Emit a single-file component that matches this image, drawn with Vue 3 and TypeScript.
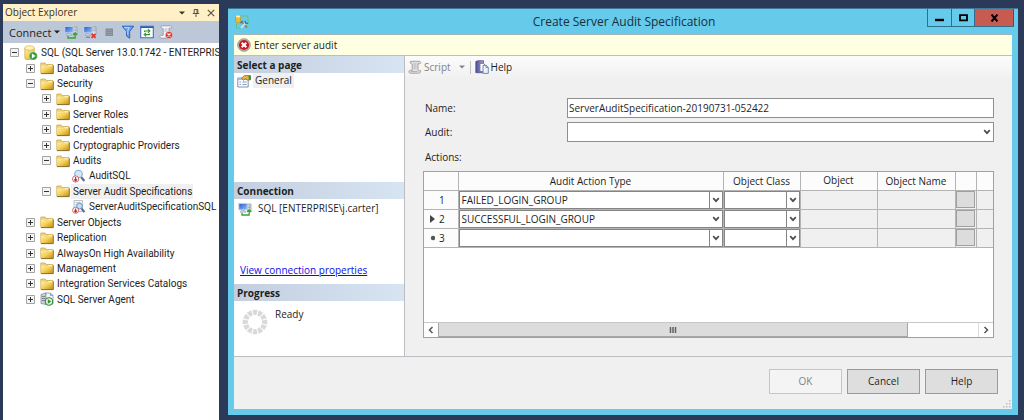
<script setup lang="ts">
import { ref } from 'vue'

interface TreeNode {
  label: string
  level: number
  icon: string
  state: 'open' | 'closed' | 'leaf'
  selected?: boolean
}

interface ActionRow {
  marker: '' | 'current' | 'new'
  action: string
}

const nodes: TreeNode[] = [
  { label: 'SQL (SQL Server 13.0.1742 - ENTERPRISE', level: 0, icon: 'server', state: 'open' },
  { label: 'Databases', level: 1, icon: 'folder', state: 'closed' },
  { label: 'Security', level: 1, icon: 'folder', state: 'open' },
  { label: 'Logins', level: 2, icon: 'folder', state: 'closed' },
  { label: 'Server Roles', level: 2, icon: 'folder', state: 'closed' },
  { label: 'Credentials', level: 2, icon: 'folder', state: 'closed' },
  { label: 'Cryptographic Providers', level: 2, icon: 'folder', state: 'closed' },
  { label: 'Audits', level: 2, icon: 'folder', state: 'open' },
  { label: 'AuditSQL', level: 3, icon: 'audit', state: 'leaf' },
  { label: 'Server Audit Specifications', level: 2, icon: 'folder', state: 'open', selected: true },
  { label: 'ServerAuditSpecificationSQL', level: 3, icon: 'spec', state: 'leaf' },
  { label: 'Server Objects', level: 1, icon: 'folder', state: 'closed' },
  { label: 'Replication', level: 1, icon: 'folder', state: 'closed' },
  { label: 'AlwaysOn High Availability', level: 1, icon: 'folder', state: 'closed' },
  { label: 'Management', level: 1, icon: 'folder', state: 'closed' },
  { label: 'Integration Services Catalogs', level: 1, icon: 'folder', state: 'closed' },
  { label: 'SQL Server Agent', level: 1, icon: 'agent', state: 'closed' },
]

const tools = [
  { icon: 'connect', label: 'Connect Object Explorer' },
  { icon: 'disconnect', label: 'Disconnect' },
  { icon: 'stop', label: 'Stop' },
  { icon: 'filter', label: 'Filter' },
  { icon: 'refresh', label: 'Refresh' },
  { icon: 'scripterror', label: 'Script error' },
]

const name = ref('ServerAuditSpecification-20190731-052422')
const audit = ref('')
const rows = ref<ActionRow[]>([
  { marker: '', action: 'FAILED_LOGIN_GROUP' },
  { marker: 'current', action: 'SUCCESSFUL_LOGIN_GROUP' },
  { marker: 'new', action: '' },
])
const actionTypes = ['', 'FAILED_LOGIN_GROUP', 'SUCCESSFUL_LOGIN_GROUP']
const ticks = Array.from({ length: 12 }, (_, i) => i * 30)
</script>

<template>
  <svg class="defs" aria-hidden="true">
    <defs>
      <linearGradient id="gold" x1="0" y1="0" x2="1" y2="1">
        <stop offset="0" stop-color="#fff0a8" />
        <stop offset="0.5" stop-color="#f3cf57" />
        <stop offset="1" stop-color="#c98f10" />
      </linearGradient>
      <linearGradient id="blue" x1="0" y1="0" x2="1" y2="1">
        <stop offset="0" stop-color="#2b55c8" />
        <stop offset="1" stop-color="#8fc4ff" />
      </linearGradient>
      <linearGradient id="indigo" x1="0" y1="0" x2="1" y2="0">
        <stop offset="0" stop-color="#4a4a94" />
        <stop offset="1" stop-color="#a9a9dd" />
      </linearGradient>
    </defs>
    <symbol id="folder" viewBox="0 0 14 14">
      <path d="M.8 2h4.4l1 1.5h6.6v8.7H.8z" fill="#ecd27c" stroke="#c8a548" stroke-width=".7" />
      <path d="M1.2 4.6h11.6v7.6H1.2z" fill="url(#gold)" />
      <path d="M1 12.6h12.3V4.3" fill="none" stroke="#7a6322" stroke-width=".9" />
      <path d="M8.5 4.8h3.8" stroke="#fff8d8" />
    </symbol>
    <symbol id="server" viewBox="0 0 14 16">
      <path d="M.8 3v10c0 3 9.4 3 9.4 0V3z" fill="url(#gold)" stroke="#c49a2c" stroke-width=".6" />
      <ellipse cx="5.5" cy="3" rx="4.7" ry="2.2" fill="#fff3bd" stroke="#c9a94a" stroke-width=".6" />
      <circle cx="9.2" cy="11" r="4.3" fill="#3c9b3a" stroke="#e6f3df" stroke-width=".7" />
      <path d="M7.9 8.6v4.8l3.6-2.4z" fill="#fff" />
    </symbol>
    <symbol id="audit" viewBox="0 0 14 14">
      <circle cx="6.5" cy="5" r="3.8" fill="#cfe8fa" stroke="#8fa9c4" stroke-width="1.1" />
      <path d="M9.2 8.2l3.2 3.8" stroke="#5a6f96" stroke-width="2.2" />
      <circle cx="3.6" cy="10" r="3.1" fill="#fff" stroke="#c4474d" stroke-width=".8" />
      <path d="M3.6 8v4M2.2 10.4l1.4 1.6L5 10.4" fill="none" stroke="#c0262d" stroke-width="1.1" />
    </symbol>
    <symbol id="spec" viewBox="0 0 14 14">
      <path d="M2 .5h8.5v11H2z" fill="#eef3fa" stroke="#a9b4c2" stroke-width=".8" />
      <path d="M3.5 2.5h5M3.5 4.5h3" stroke="#b5bfcc" stroke-width=".8" />
      <circle cx="7.5" cy="6" r="2.8" fill="#bfe0fa" stroke="#7894b4" />
      <path d="M9.5 8.5l3 3.7" stroke="#5a6f96" stroke-width="2" />
      <circle cx="3.6" cy="10.3" r="3" fill="#fff" stroke="#c4474d" stroke-width=".8" />
      <path d="M3.6 8.4v4M2.2 10.6l1.4 1.6L5 10.6" fill="none" stroke="#c0262d" stroke-width="1.1" />
    </symbol>
    <symbol id="agent" viewBox="0 0 14 14">
      <path d="M1 2.5L6 .8v11.7l-5-1z" fill="#c9ced6" stroke="#7b838f" stroke-width=".7" />
      <path d="M2 4.5h3M2 6.5h3M2 8.5h3" stroke="#6c7480" stroke-width=".8" />
      <path d="M6 1h4.5L13 3.5V12H6z" fill="#f2f6fb" stroke="#8995a6" stroke-width=".8" />
      <path d="M10.5 1v2.5H13" fill="#9cc0e6" stroke="#6c8fb8" stroke-width=".7" />
      <circle cx="9" cy="9.5" r="3.7" fill="#dff2dc" stroke="#2f8f31" stroke-width="1.1" />
      <path d="M7.8 7.3v4.4l3.4-2.2z" fill="#2f8f31" />
    </symbol>
    <symbol id="pc" viewBox="0 0 14 14">
      <path d="M9.5 2h3.5v7.5H9.5z" fill="#dde2e8" stroke="#87909c" stroke-width=".7" />
      <path d="M10.3 4h2M10.3 5.7h2" stroke="#78828e" stroke-width=".7" />
      <path d="M.8 1.4h8.4v6.5H.8z" fill="url(#blue)" stroke="#c9d6ea" stroke-width=".9" />
      <path d="M3 8.6h4l1 1.6H2z" fill="#d8dde4" stroke="#8791a0" stroke-width=".5" />
    </symbol>
    <symbol id="connect" viewBox="0 0 14 14">
      <use href="#pc" />
      <path d="M4 10.8v2.2h7.2V8.5M9.2 10l2-2.2 2 2.2" fill="none" stroke="#35a335" stroke-width="1.3" />
    </symbol>
    <symbol id="disconnect" viewBox="0 0 14 14">
      <use href="#pc" />
      <path d="M3 12.2h4" stroke="#6c7480" />
      <path d="M8.6 8.8l4 4M12.6 8.8l-4 4" stroke="#e0372d" stroke-width="1.8" />
    </symbol>
    <symbol id="stop" viewBox="0 0 14 14"><path d="M3.5 3.5h7.5V11H3.5z" fill="#868c94" /><path d="M4.5 5.5h5.5M4.5 7.5h5.5M4.5 9.5h5.5" stroke="#979da5" /></symbol>
    <symbol id="filter" viewBox="0 0 14 14">
      <path d="M1.2 1.2h11.6L8.7 6.4v6.8L5.6 11V6.4z" fill="#6fa3ea" stroke="#2f62bb" />
      <path d="M3.2 2.5h5L6.8 5.5v4.2" fill="none" stroke="#b9d7fb" />
    </symbol>
    <symbol id="refresh" viewBox="0 0 14 14">
      <path d="M.7 1.3h12.6v11.4H.7z" fill="#fff" stroke="#3c6fc0" stroke-width="1.1" />
      <path d="M.7 2.2h12.6" stroke="#2b5cb4" stroke-width="1.6" />
      <path d="M4.6 7V6h4.2M8 4.2L9.8 6 8 7.8M9.4 8.6v1H5.2M6 7.8L4.2 9.6 6 11.4" fill="none" stroke="#2f9a2e" stroke-width="1.2" />
    </symbol>
    <symbol id="script" viewBox="0 0 14 14">
      <path d="M3 1.3h8.4c1.6 0 1.9 2.4.2 2.4H10v5.8c.3 1.6 1.2 1.6 2.6 1v1.2c0 .9-1 1.5-2 1.5H2.4c-2 0-2-2.9 0-2.9h1.8V4.2C2 4 1.4 1.3 3 1.3z" fill="#dfdfdf" stroke="#9c9c9c" stroke-width=".9" />
      <path d="M5.5 4h3M5.5 6h3M5.5 8h3M2.6 11.5h7" stroke="#aaa" stroke-width=".8" />
    </symbol>
    <symbol id="scripterror" viewBox="0 0 14 14">
      <path d="M3 .8h8.4c1.6 0 1.9 2.4.2 2.4H10v7H12v1.5c0 .9-1 1.5-2 1.5H2.4c-2 0-2-2.9 0-2.9h1.8V3.7C2 3.5 1.4.8 3 .8z" fill="#f3f5f8" stroke="#8b93a0" stroke-width=".8" />
      <path d="M5.5 4h3M5.5 6h3" stroke="#9aa3b0" stroke-width=".8" />
      <circle cx="10" cy="10" r="3.6" fill="#d5322c" stroke="#f5d9d6" stroke-width=".6" />
      <path d="M8.5 8.5l3 3M11.5 8.5l-3 3" stroke="#fff" stroke-width="1.2" />
    </symbol>
    <symbol id="dialog" viewBox="0 0 14 14">
      <path d="M6 1h7v7M1.5 9v4H6" fill="none" stroke="#69bb52" stroke-dasharray="1.6 1" />
      <path d="M.8 1.5v5.3c0 1.4 4.6 1.4 4.6 0V1.5z" fill="#eebe35" stroke="#b98b1a" stroke-width=".6" />
      <ellipse cx="3.1" cy="1.6" rx="2.3" ry="1" fill="#fff1ae" />
      <path d="M7.2 7.6l5 5" stroke="#a9803c" stroke-width="1.8" />
      <path d="M6 13l5-5.3" stroke="#dbe2ea" stroke-width="1.8" />
      <path d="M10.2 5.8l.4 2.3 2.6.3M5.4 8.2l2.4-2.4" fill="none" stroke="#5a6470" stroke-width="1.2" />
    </symbol>
    <symbol id="error" viewBox="0 0 14 14">
      <circle cx="7" cy="7" r="6.3" fill="#bdbdbd" stroke="#858585" stroke-width=".8" />
      <circle cx="7" cy="7" r="5.1" fill="#c91a20" />
      <path d="M4.7 4.7l4.6 4.6M9.3 4.7L4.7 9.3" stroke="#fff" stroke-width="2" />
    </symbol>
    <symbol id="page" viewBox="0 0 14 14">
      <path d="M.8 4h10.4v9H.8z" fill="#f7faff" stroke="#6f88ac" stroke-width=".9" />
      <path d="M1 5.2h10" stroke="#9fb8da" stroke-width="1.5" />
      <path d="M2.5 8h1.5M2.5 10.5h1.5M5.5 8h4M5.5 10.5h4" stroke="#7d95b8" stroke-width=".9" />
      <path d="M4.5 4.2L7.6 1.4l4.2.2 1.8 1.2v3L10.5 6 8.6 4.7 6.6 6.2z" fill="#e3b54a" stroke="#84601a" stroke-width=".7" />
      <path d="M11.5 1.2h2.3v4.5h-2z" fill="#3d8a43" />
    </symbol>
    <symbol id="help" viewBox="0 0 14 14">
      <path d="M.8 1.5L3 .7h5.5v12H.8z" fill="url(#indigo)" stroke="#454585" stroke-width=".7" />
      <path d="M5 3.4h3.5l1.7 1.7v6.4H5z" fill="#fff" stroke="#5d6f9e" stroke-width=".8" />
      <path d="M8 5.3h3.2L13.3 7.4v6H8z" fill="#eaf1fb" stroke="#5d6f9e" stroke-width=".8" />
      <path d="M11 5.3v2.2h2.3" fill="none" stroke="#5d6f9e" stroke-width=".7" />
    </symbol>
    <symbol id="chevron" viewBox="0 0 8 8"><path d="M1.2 2.2L4 5.2l2.8-3" fill="none" stroke="#4c4c4c" stroke-width="1.7" /></symbol>
    <symbol id="caret" viewBox="0 0 6 4"><path d="M0 .5h6L3 3.5z" fill="currentColor" /></symbol>
  </svg>

  <div class="desktop">
    <aside class="explorer">
      <header class="explorer-title">
        <h2>Object Explorer</h2>
        <button aria-label="Window position"><svg class="caret"><use href="#caret" /></svg></button>
        <button aria-label="Auto hide"><svg class="mini" viewBox="0 0 8 8"><path d="M2.2 .5h3.6v4H2.2zM5 .5v4M.8 4.5h6.4M4 4.5V8" fill="none" stroke="#5c5544" /></svg></button>
        <button aria-label="Close"><svg class="mini" viewBox="0 0 8 8"><path d="M.8 .8l6.4 6.4M7.2 .8L.8 7.2" stroke="#5c5544" stroke-width="1.2" /></svg></button>
      </header>
      <div class="explorer-tools">
        <button class="connect">Connect <svg class="caret"><use href="#caret" /></svg></button>
        <button v-for="tool in tools" :key="tool.icon" :aria-label="tool.label"><svg class="icon"><use :href="'#' + tool.icon" /></svg></button>
      </div>
      <ul class="tree">
        <li v-for="node in nodes" :key="node.label" :class="'level-' + node.level">
          <button v-if="node.state !== 'leaf'" class="expander" :aria-label="'Toggle ' + node.label">
            <svg viewBox="0 0 9 9"><path d="M.5 .5h8v8h-8z" fill="#f4f4f4" stroke="#a3a3a3" /><path d="M2 4.5h5" stroke="#333" /><path v-if="node.state === 'closed'" d="M4.5 2v5" stroke="#333" /></svg>
          </button>
          <span v-else class="expander"></span>
          <svg class="icon" :class="{ tall: node.icon === 'server' }"><use :href="'#' + node.icon" /></svg>
          <span class="node-label" :class="{ selected: node.selected }">{{ node.label }}</span>
        </li>
      </ul>
    </aside>

    <main class="dialog">
      <header class="titlebar">
        <svg class="icon"><use href="#dialog" /></svg>
        <h1>Create Server Audit Specification</h1>
        <div class="window-buttons">
          <button class="minimize" aria-label="Minimize"><svg viewBox="0 0 9 8"><path d="M0 6h9" stroke="#000" stroke-width="2.4" /></svg></button>
          <button class="maximize" aria-label="Maximize"><svg viewBox="0 0 9 8"><path d="M1 1.2h7v5.2H1z" fill="none" stroke="#000" stroke-width="1.8" /></svg></button>
          <button class="close" aria-label="Close dialog"><svg viewBox="0 0 9 8"><path d="M1.5 .5l6 7M7.5 .5l-6 7" stroke="#000" stroke-width="2" /></svg></button>
        </div>
      </header>

      <div class="content">
        <div class="message"><svg class="icon"><use href="#error" /></svg>Enter server audit</div>
        <div class="body">
          <nav class="side">
            <section class="pages">
              <h3>Select a page</h3>
              <div class="page-item"><svg class="icon"><use href="#page" /></svg><button>General</button></div>
            </section>
            <section class="connection">
              <h3>Connection</h3>
              <p><svg class="icon"><use href="#connect" /></svg>SQL [ENTERPRISE\j.carter]</p>
              <a href="#">View connection properties</a>
            </section>
            <section class="progress">
              <h3>Progress</h3>
              <p>
                <svg class="spinner" viewBox="0 0 26 26"><path v-for="angle in ticks" :key="angle" d="M10.4 .8h5.2l-1.2 5.2h-2.8z" fill="#d9d9d9" :transform="`rotate(${angle} 13 13)`" /></svg>
                Ready
              </p>
            </section>
          </nav>

          <div class="page">
            <div class="page-tools">
              <button class="script" disabled><svg class="icon"><use href="#script" /></svg>Script<svg class="caret"><use href="#caret" /></svg></button>
              <span class="divider"></span>
              <button><svg class="icon"><use href="#help" /></svg>Help</button>
            </div>
            <form class="form" @submit.prevent>
              <div class="field">
                <label for="spec-name">Name:</label>
                <input id="spec-name" v-model="name" type="text" />
              </div>
              <div class="field">
                <label for="spec-audit">Audit:</label>
                <span class="combo"><select id="spec-audit" v-model="audit"><option value=""></option></select><svg><use href="#chevron" /></svg></span>
              </div>
              <p id="actions-label" class="actions-label">Actions:</p>
              <div class="grid">
                <table aria-labelledby="actions-label">
                  <colgroup><col class="c-head" /><col /><col class="c-mid" /><col class="c-mid" /><col class="c-name" /><col class="c-button" /><col class="c-rest" /></colgroup>
                  <thead>
                    <tr><th></th><th>Audit Action Type</th><th>Object Class</th><th class="raised">Object</th><th>Object Name</th><th></th><th></th></tr>
                  </thead>
                  <tbody>
                    <tr v-for="(row, index) in rows" :key="index">
                      <th scope="row">
                        <span class="row-head">
                          <svg viewBox="0 0 6 8"><path v-if="row.marker === 'current'" d="M1 0v8l5-4z" fill="#444" /><circle v-if="row.marker === 'new'" cx="4" cy="4" r="2.2" fill="#555" /></svg>
                          {{ index + 1 }}
                        </span>
                      </th>
                      <td>
                        <span class="combo cell" :class="{ active: row.marker === 'current' }"><select v-model="row.action" :aria-label="'Audit action type ' + (index + 1)"><option v-for="type in actionTypes" :key="type" :value="type">{{ type }}</option></select><svg><use href="#chevron" /></svg></span>
                      </td>
                      <td><span class="combo cell"><select :aria-label="'Object class ' + (index + 1)"><option></option></select><svg><use href="#chevron" /></svg></span></td>
                      <td></td>
                      <td></td>
                      <td><button class="browse" :aria-label="'Browse object ' + (index + 1)"></button></td>
                      <td></td>
                    </tr>
                  </tbody>
                </table>
                <div class="scrollbar">
                  <button type="button" aria-label="Scroll left"><svg viewBox="0 0 8 8"><path d="M5.5 1L2.5 4l3 3" fill="none" stroke="#555" stroke-width="1.5" /></svg></button>
                  <div class="track"><div class="thumb"><svg viewBox="0 0 8 6"><path d="M1.5 0v6M4 0v6M6.5 0v6" stroke="#606060" stroke-width="1.5" /></svg></div></div>
                  <button type="button" aria-label="Scroll right"><svg viewBox="0 0 8 8"><path d="M2.5 1l3 3-3 3" fill="none" stroke="#555" stroke-width="1.5" /></svg></button>
                </div>
              </div>
            </form>
          </div>
        </div>
        <footer class="buttons">
          <button disabled>OK</button>
          <button>Cancel</button>
          <button>Help</button>
          <svg class="grip" viewBox="0 0 8 8"><path d="M6 0h1.5v1.5H6zM6 3h1.5v1.5H6zM3 3h1.5v1.5H3zM6 6h1.5v1.5H6zM3 6h1.5v1.5H3zM0 6h1.5v1.5H0z" fill="#bdbdbd" /></svg>
        </footer>
      </div>
    </main>
  </div>
</template>

<style>
body {
  margin: 0;
  background: #2b3a59;
}
</style>

<style scoped>
.defs {
  position: absolute;
  width: 0;
  height: 0;
}
.desktop {
  box-sizing: border-box;
  display: flex;
  gap: 9px;
  min-height: 100vh;
  padding: 0 6px 0 3px;
  background: #2b3a59;
  color: #1e1e1e;
  font: 10px/15px "Open Sans", "Noto Sans", sans-serif;
}
h1, h2, h3, p, ul {
  margin: 0;
  padding: 0;
  font-size: inherit;
  font-weight: 400;
}
button {
  padding: 0;
  border: 0;
  background: none;
  color: inherit;
  font: inherit;
}
svg {
  display: block;
  flex: none;
}
.icon {
  width: 14px;
  height: 14px;
}
.tall {
  height: 16px;
}
.caret {
  width: 6px;
  height: 4px;
}
.mini {
  width: 8px;
  height: 8px;
}

.explorer {
  flex: none;
  width: 216px;
  margin-top: 4px;
  background: #fff;
}
.explorer-title {
  display: flex;
  align-items: center;
  gap: 7px;
  height: 17px;
  padding: 0 4px 0 2px;
  background: #fff0c8;
  color: #3a3424;
}
.explorer-title h2 {
  flex: 1;
  font-size: 10px;
}
.explorer-tools {
  display: flex;
  align-items: center;
  gap: 5px;
  height: 22px;
  padding: 0 6px;
  background: #bcc7d8;
}
.connect {
  display: flex;
  align-items: center;
  gap: 3px;
  width: 49px;
  margin-right: 1px;
  font-size: 11px;
}
.tree {
  display: grid;
  grid-auto-rows: 1fr;
  height: 262px;
  padding-top: 2px;
  font-family: Roboto, "Open Sans", sans-serif;
  list-style: none;
}
.tree li {
  display: flex;
  align-items: center;
  min-width: 0;
  padding-left: 7px;
  overflow: hidden;
  white-space: nowrap;
}
.tree .level-1 { padding-left: 23px; }
.tree .level-2 { padding-left: 39px; }
.tree .level-3 { padding-left: 55px; }
.expander {
  flex: none;
  width: 9px;
  height: 9px;
  margin-right: 5px;
}
.expander svg {
  width: 9px;
  height: 9px;
}
.node-label {
  padding-left: 3px;
}
.selected {
  padding: 0 1px 0 2px;
  margin-left: 1px;
  background: #f0f0f0;
}

.dialog {
  box-sizing: border-box;
  display: flex;
  flex: 1;
  flex-direction: column;
  min-width: 0;
  margin: 8px 0 5px;
  padding: 0 6px 6px;
  border-top: 1px solid #3f7896;
  background: #66caea;
}
.titlebar {
  display: flex;
  align-items: center;
  height: 25px;
  padding-left: 1px;
}
.titlebar h1 {
  flex: 1;
  padding-left: 72px;
  color: #16303c;
  font-size: 12px;
  line-height: 18px;
  text-align: center;
}
.window-buttons {
  display: flex;
  align-self: flex-start;
  margin-right: -2px;
}
.window-buttons button {
  display: flex;
  align-items: center;
  justify-content: center;
  width: 24px;
  height: 18px;
  border: 1px solid #2f6f8b;
  border-top: 0;
  border-right: 0;
}
.window-buttons .maximize {
  width: 23px;
}
.window-buttons .close {
  width: 40px;
  border-right: 1px solid #7a4040;
  background: #c75b52;
}
.window-buttons svg {
  width: 9px;
  height: 8px;
}
.content {
  display: flex;
  flex: 1;
  flex-direction: column;
  border-top: 1px solid #a6b3b8;
  background: #f0f0f0;
}
.message {
  display: flex;
  align-items: center;
  gap: 3px;
  height: 20px;
  padding-left: 3px;
  border-bottom: 1px solid #bdbdc4;
  background: #ffffe1;
}
.body {
  display: flex;
  flex: 1;
  border-bottom: 1px solid #bcbcc2;
}

.side {
  display: flex;
  flex: none;
  flex-direction: column;
  width: 170px;
  border-right: 1px solid #bcbcc2;
  background: #fff;
}
.side h3 {
  height: 17px;
  padding-left: 3px;
  background: linear-gradient(90deg, #c3cfdf, #d7e4f2);
  font-weight: 700;
  line-height: 18px;
}
.side p {
  display: flex;
  align-items: center;
}
.pages {
  height: 126px;
}
.page-item {
  display: flex;
  align-items: center;
  gap: 2px;
  padding-left: 3px;
}
.page-item button {
  padding: 0 2px;
  background: #f0f0f0;
}
.connection {
  height: 102px;
}
.connection p {
  gap: 6px;
  height: 19px;
  padding-left: 4px;
}
.connection a {
  display: block;
  margin: 45px 0 0 6px;
  color: #0d0de8;
}
.progress p {
  align-items: flex-start;
  gap: 7px;
  padding: 6px 0 0 8px;
}
.spinner {
  width: 26px;
  height: 26px;
  margin-top: 2px;
}

.page {
  display: flex;
  flex: 1;
  flex-direction: column;
  min-width: 0;
}
.page-tools {
  display: flex;
  align-items: center;
  height: 22px;
  padding-left: 3px;
  background: linear-gradient(#fcfcfc, #f1f1f1);
}
.page-tools button {
  display: flex;
  align-items: center;
  gap: 2px;
}
.page-tools .script {
  color: #838383;
}
.script .caret {
  margin-left: 6px;
}
.divider {
  width: 1px;
  height: 13px;
  margin: 0 4px 0 5px;
  background: #c3c3c3;
}
.form {
  display: flex;
  flex: 1;
  flex-direction: column;
  padding: 20px 18px 18px;
}
.field {
  display: flex;
  align-items: center;
  margin-bottom: 4px;
}
.field label {
  width: 142px;
  padding-left: 2px;
}
.field input,
.combo {
  box-sizing: border-box;
  flex: 1;
  min-width: 0;
  height: 20px;
  border: 1px solid #8e8e8e;
  background: #fff;
}
.field input {
  padding: 0 1px;
  color: inherit;
  font: inherit;
}
.combo {
  position: relative;
  display: block;
}
.combo select {
  appearance: none;
  box-sizing: border-box;
  display: block;
  width: 100%;
  height: 100%;
  padding: 0 2px;
  border: 0;
  border-radius: 0;
  background: transparent;
  color: inherit;
  font: inherit;
}
.combo svg {
  position: absolute;
  top: 5px;
  right: 2px;
  width: 8px;
  height: 8px;
  pointer-events: none;
}
.actions-label {
  margin: 4px 0 6px;
  padding-left: 2px;
}
.grid {
  display: flex;
  flex: 1;
  flex-direction: column;
  justify-content: space-between;
  border: 1px solid #a0a0a0;
  background: #fff;
}
table {
  width: 100%;
  border-collapse: collapse;
  table-layout: fixed;
}
.c-head { width: 34px; }
.c-mid { width: 77px; }
.c-name { width: 78px; }
.c-button { width: 21px; }
.c-rest { width: 17px; }
th,
td {
  box-sizing: border-box;
  height: 19px;
  padding: 0;
  border: 1px solid #b4b4b4;
  border-top: 0;
  border-left: 0;
  font-weight: 400;
  line-height: 16px;
}
th {
  background: #fcfcfc;
}
thead th {
  height: 18px;
}
td {
  background: #f0f0f0;
}
tr > :last-child {
  border-right: 0;
}
.raised {
  padding-bottom: 2px;
  line-height: 14px;
}
.row-head {
  display: flex;
  align-items: center;
  gap: 4px;
  padding-left: 5px;
}
.row-head svg {
  width: 6px;
  height: 8px;
}
.cell {
  height: 18px;
  border-color: #858585;
}
.cell::after {
  position: absolute;
  top: 0;
  right: 12px;
  bottom: 0;
  width: 1px;
  background: #858585;
  content: "";
}
.cell svg {
  top: 4px;
}
.active::after {
  display: none;
}
.browse {
  display: block;
  box-sizing: border-box;
  width: 19px;
  height: 17px;
  border: 1px solid #a0a0a0;
  background: #dcdcdc;
}
.scrollbar {
  display: flex;
  height: 14px;
  border-top: 1px solid #c8c8c8;
}
.scrollbar button {
  display: flex;
  align-items: center;
  justify-content: center;
  width: 14px;
}
.scrollbar button svg {
  width: 8px;
  height: 8px;
}
.track {
  flex: 1;
  border-right: 1px solid #dcdcdc;
}
.thumb {
  box-sizing: border-box;
  display: flex;
  align-items: center;
  justify-content: center;
  width: 87%;
  height: 100%;
  border: 1px solid #a6a6a6;
  border-top: 0;
  background: #dcdcdc;
}
.thumb svg {
  width: 8px;
  height: 6px;
}

.buttons {
  position: relative;
  display: flex;
  justify-content: flex-end;
  gap: 5px;
  padding: 12px 14px 15px;
}
.buttons button {
  width: 73px;
  height: 25px;
  border: 1px solid #9a9a9a;
  background: #dedede;
}
.buttons button:disabled {
  border-color: #c3c7ca;
  background: #f4f4f4;
  color: #838383;
}
.grip {
  position: absolute;
  right: 1px;
  bottom: 1px;
  width: 8px;
  height: 8px;
}
</style>
